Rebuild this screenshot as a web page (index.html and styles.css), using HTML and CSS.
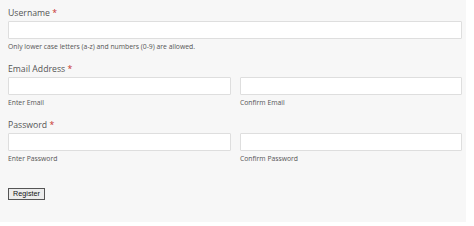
FILE: index.html
```html
<!DOCTYPE html>
<html>
<head>
<meta charset="utf-8">
<link rel="stylesheet" href="styles.css">
</head>
<body>
<div class="panel">
  <form class="form">
    <div class="field">
      <label class="label">Username <span class="req">*</span></label>
      <input class="input" type="text">
      <div class="help">Only lower case letters (a-z) and numbers (0-9) are allowed.</div>
    </div>
    <div class="field">
      <label class="label">Email Address <span class="req">*</span></label>
      <div class="pair">
        <div class="col">
          <input class="input" type="text">
          <div class="help">Enter Email</div>
        </div>
        <div class="col">
          <input class="input" type="text">
          <div class="help">Confirm Email</div>
        </div>
      </div>
    </div>
    <div class="field">
      <label class="label">Password <span class="req">*</span></label>
      <div class="pair">
        <div class="col">
          <input class="input" type="password">
          <div class="help">Enter Password</div>
        </div>
        <div class="col">
          <input class="input" type="password">
          <div class="help">Confirm Password</div>
        </div>
      </div>
    </div>
    <div class="actions">
      <button class="btn" type="button">Register</button>
    </div>
  </form>
</div>
</body>
</html>
```

FILE: styles.css
```css
html, body {
  margin: 0;
  padding: 0;
  background: #ffffff;
}
.panel {
  width: 466px;
  height: 222px;
  background: #f7f7f7;
  box-sizing: border-box;
  padding: 7px 4px 0 8px;
  font-family: "Open Sans", "Noto Sans", sans-serif;
}
.form {
  display: flex;
  flex-direction: column;
}
.field {
  display: flex;
  flex-direction: column;
  margin-bottom: 12px;
}
.label {
  display: block;
  font-size: 8.7px;
  line-height: 12px;
  color: #555555;
  margin-bottom: 2px;
}
.req {
  color: #c8322e;
}
.input {
  display: block;
  box-sizing: border-box;
  width: 100%;
  height: 18px;
  margin: 0;
  padding: 0 4px;
  background: #ffffff;
  border: 1px solid #dedede;
  border-radius: 1px;
  outline: none;
}
.help {
  font-size: 6.8px;
  line-height: 9px;
  color: #555555;
  margin-top: 3px;
}
.pair {
  display: grid;
  grid-template-columns: 223px 222px;
  column-gap: 9px;
}
.col {
  display: flex;
  flex-direction: column;
}
.actions {
  display: flex;
  padding-top: 13px;
}
.btn {
  box-sizing: border-box;
  height: 12px;
  width: 37px;
  padding: 0;
  margin: 0;
  font-family: "Liberation Sans", Arial, sans-serif;
  font-size: 7.2px;
  line-height: 10px;
  color: #111111;
  background: #ececec;
  border: 1px solid #555555;
  border-radius: 0;
}
```
